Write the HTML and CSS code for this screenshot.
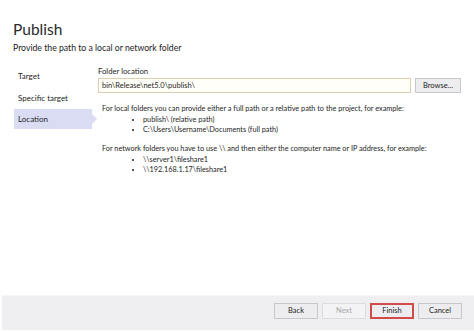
FILE: index.html
```html
<!DOCTYPE html>
<html>
<head>
<meta charset="utf-8">
<link rel="stylesheet" href="styles.css">
</head>
<body>
<div class="dialog">
  <header class="head">
    <h1 class="title">Publish</h1>
    <p class="subtitle">Provide the path to a local or network folder</p>
  </header>
  <div class="main">
    <nav class="nav">
      <div class="nav-item">Target</div>
      <div class="nav-item">Specific target</div>
      <div class="nav-item selected">Location</div>
    </nav>
    <section class="content">
      <div class="label">Folder location</div>
      <div class="path-row">
        <div class="input">bin\Release\net5.0\publish\</div>
        <div class="btn browse">Browse...</div>
      </div>
      <p class="para">For local folders you can provide either a full path or a relative path to the project, for example:</p>
      <ul class="list">
        <li>publish\ (relative path)</li>
        <li>C:\Users\Username\Documents (full path)</li>
      </ul>
      <p class="para">For network folders you have to use \\ and then either the computer name or IP address, for example:</p>
      <ul class="list">
        <li>\\server1\fileshare1</li>
        <li>\\192.168.1.17\fileshare1</li>
      </ul>
    </section>
  </div>
  <footer class="footer">
    <div class="btn">Back</div>
    <div class="btn disabled">Next</div>
    <div class="btn primary">Finish</div>
    <div class="btn">Cancel</div>
  </footer>
</div>
</body>
</html>
```

FILE: styles.css
```css
* { box-sizing: border-box; }
html, body { margin: 0; padding: 0; background: #fff; }
body {
  font-family: Lato, "Open Sans", sans-serif;
  color: #1e1e1e;
  width: 474px;
  height: 332px;
  overflow: hidden;
}
.dialog {
  display: flex;
  flex-direction: column;
  height: 332px;
}
.head { padding: 19px 0 0 13px; }
.title {
  margin: 0;
  font-weight: 400;
  font-size: 15.5px;
  line-height: 20px;
  color: #2a2a2a;
}
.subtitle {
  margin: 3px 0 0;
  font-size: 8.7px;
  line-height: 12px;
  color: #222;
}
.main {
  display: flex;
  flex: 1;
  padding-top: 12px;
}
.nav {
  width: 86px;
  padding-left: 14px;
  display: flex;
  flex-direction: column;
}
.nav-item {
  font-size: 8px;
  height: 22px;
  line-height: 22px;
  padding-left: 4px;
  color: #1e1e1e;
  position: relative;
}
.nav-item:first-child { margin-top: -1px; }
.nav-item.selected {
  background: #dadcf4;
  width: 78px;
  height: 20px;
  line-height: 20px;
}
.nav-item.selected::after {
  content: "";
  position: absolute;
  right: -5px;
  top: 5px;
  border-left: 5px solid #dadcf4;
  border-top: 5px solid transparent;
  border-bottom: 5px solid transparent;
}
.content {
  flex: 1;
  padding-left: 12px;
  padding-right: 13px;
  font-size: 7.3px;
}
.label { font-size: 7.7px; line-height: 12px; margin-top: -1px; }
.path-row {
  display: flex;
  gap: 4px;
  margin-top: 1px;
}
.input {
  flex: 1;
  height: 15px;
  border: 1px solid #dccfae;
  background: #fffef8;
  font-size: 7.5px;
  line-height: 13px;
  padding-left: 3px;
  color: #1e1e1e;
}
.btn {
  width: 45px;
  height: 15px;
  border: 1px solid #c8c8cc;
  background: #ededf0;
  font-size: 7.5px;
  line-height: 13px;
  text-align: center;
  color: #1e1e1e;
}
.browse { width: 46px; }
.para {
  margin: 10px 0 0 4px;
  line-height: 11px;
  white-space: nowrap;
}
.list {
  margin: 1px 0 0;
  padding-left: 45px;
  line-height: 10px;
}
.list + .para { margin-top: 8px; }
.footer {
  margin: 0 0 2px 2px;
  height: 35px;
  background: #efeff2;
  border-top: 1px solid #f6f6f8;
  display: flex;
  justify-content: flex-end;
  align-items: center;
  gap: 4px;
  padding-right: 12px;
  padding-bottom: 4px;
}
.footer .btn { width: 44px; height: 16px; line-height: 14px; }
.btn.disabled { color: #a8a8a8; border-color: #dcdce0; background: #f3f3f5; }
.btn.primary { border: 2px solid #d24a4a; line-height: 12px; }
```
